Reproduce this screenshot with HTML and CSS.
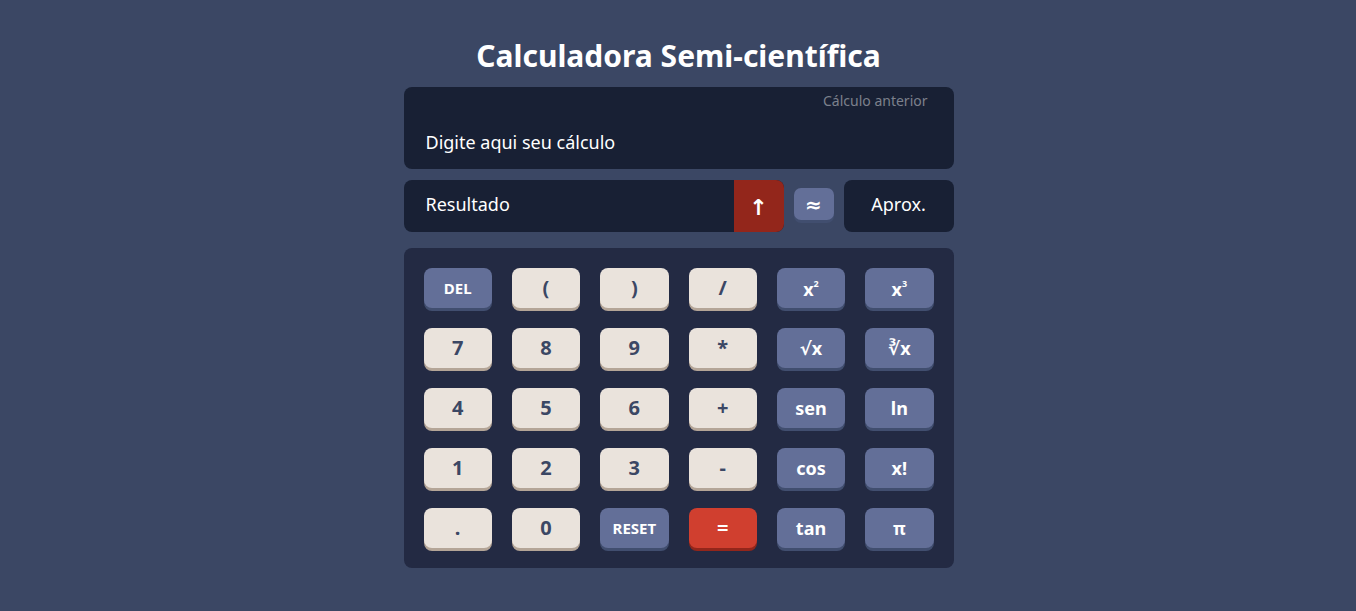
FILE: index.html
```html
<!DOCTYPE html>
<html lang="pt-BR">
<head>
    <meta charset="UTF-8">
    <meta name="viewport" content="width=device-width, initial-scale=1.0">
    <title>Calculadora Semi-científica</title>
    <link rel="stylesheet" href="styles.css">
</head>
<body>
    <div class="calculator">
        <h1>Calculadora Semi-científica</h1>

        <div class="display">
            <span class="previous">Cálculo anterior</span>
            <span class="input">Digite aqui seu cálculo</span>
        </div>

        <div class="result-row">
            <div class="result">
                <span>Resultado</span>
                <button class="arrow-btn">&#8593;</button>
            </div>
            <button class="approx-btn">&#8776;</button>
            <div class="approx">Aprox.</div>
        </div>

        <div class="keypad">
            <button class="key fn small">DEL</button>
            <button class="key">(</button>
            <button class="key">)</button>
            <button class="key">/</button>
            <button class="key fn">x<sup>2</sup></button>
            <button class="key fn">x<sup>3</sup></button>

            <button class="key">7</button>
            <button class="key">8</button>
            <button class="key">9</button>
            <button class="key">*</button>
            <button class="key fn">&#8730;x</button>
            <button class="key fn"><span class="cube">&#8731;</span>x</button>

            <button class="key">4</button>
            <button class="key">5</button>
            <button class="key">6</button>
            <button class="key">+</button>
            <button class="key fn">sen</button>
            <button class="key fn">ln</button>

            <button class="key">1</button>
            <button class="key">2</button>
            <button class="key">3</button>
            <button class="key">-</button>
            <button class="key fn">cos</button>
            <button class="key fn">x!</button>

            <button class="key">.</button>
            <button class="key">0</button>
            <button class="key fn small">RESET</button>
            <button class="key equal">=</button>
            <button class="key fn">tan</button>
            <button class="key fn pi">&#960;</button>
        </div>
    </div>
</body>
</html>
```

FILE: styles.css
```css
body {
    background-color: #3b4764;
    margin: 0;
    padding: 0 0 0 1px;
    font-family: "Noto Sans", "DejaVu Sans", sans-serif;
    color: #fff;
}

.calculator {
    width: 550px;
    margin: 0 auto;
    padding-top: 37px;
}

h1 {
    margin: 0 0 12px;
    text-align: center;
    font-size: 30px;
    font-weight: bold;
    line-height: 38px;
}

.display {
    background-color: #182034;
    border-radius: 8px;
    height: 82px;
    box-sizing: border-box;
    padding: 6px 26px 0 22px;
    display: flex;
    flex-direction: column;
}

.previous {
    align-self: flex-end;
    font-size: 14px;
    color: #7c808c;
    line-height: 16px;
}

.input {
    margin-top: 21px;
    font-size: 18px;
    line-height: 24px;
}

.result-row {
    display: flex;
    align-items: center;
    gap: 10px;
    margin-top: 11px;
}

.result {
    flex: 1;
    height: 52px;
    background-color: #182034;
    border-radius: 8px;
    display: flex;
    align-items: center;
    overflow: hidden;
    font-size: 18px;
}

.result span {
    flex: 1;
    padding-left: 22px;
    margin-top: -4px;
}

.arrow-btn {
    width: 50px;
    height: 100%;
    border: none;
    background-color: #93261b;
    color: #fff;
    font-size: 22px;
    font-weight: bold;
    font-family: inherit;
    padding: 0;
}

.approx-btn {
    width: 40px;
    height: 32px;
    border: none;
    border-radius: 7px;
    background-color: #636f98;
    box-shadow: 0 3px 0 #414e6f;
    color: #fff;
    font-size: 20px;
    font-weight: bold;
    font-family: inherit;
    margin-top: -4px;
}

.approx {
    width: 110px;
    height: 52px;
    background-color: #182034;
    border-radius: 8px;
    display: flex;
    align-items: center;
    justify-content: center;
    font-size: 18px;
    padding-bottom: 4px;
    box-sizing: border-box;
}

.keypad {
    margin-top: 16px;
    background-color: #232a43;
    border-radius: 8px;
    padding: 20px 20px 20px;
    display: grid;
    grid-template-columns: repeat(6, 1fr);
    column-gap: 20px;
    row-gap: 20px;
}

.key {
    height: 40px;
    border: none;
    border-radius: 8px;
    background-color: #eae3dc;
    box-shadow: 0 3px 0 #b4a597;
    color: #3b4764;
    font-family: inherit;
    font-size: 20px;
    font-weight: bold;
    padding: 0;
    line-height: 1;
}

.key.fn {
    background-color: #636f98;
    box-shadow: 0 3px 0 #414e6f;
    color: #fff;
    font-size: 18px;
}

.key.small {
    font-size: 15px;
}

.key.pi {
    font-size: 17px;
}

.key.equal {
    background-color: #d03f2f;
    box-shadow: 0 3px 0 #93261b;
    color: #fff;
}

.key sup {
    font-size: 9px;
    vertical-align: 9px;
}

.cube {
    font-family: "DejaVu Sans", sans-serif;
}
```
